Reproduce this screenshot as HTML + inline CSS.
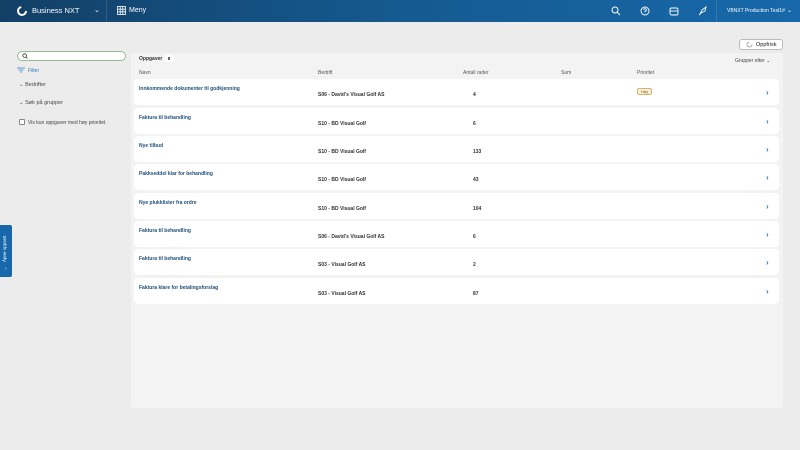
<!DOCTYPE html>
<html><head><meta charset="utf-8"><style>
*{margin:0;padding:0;box-sizing:border-box}
body{width:800px;height:450px;overflow:hidden;background:#ececec;font-family:"Liberation Sans",sans-serif;position:relative;color:#222}
.hdr{position:absolute;left:0;top:0;width:800px;height:22px;background:linear-gradient(90deg,#123f66 0%,#155a90 50%,#1768aa 100%);color:#fff;font-size:7px}
.hdr span{position:absolute;top:7px}
.sep{position:absolute;top:0;width:1px;height:22px;background:rgba(255,255,255,.12)}
.panel{position:absolute;left:131px;top:53px;width:652px;height:355px;background:#f3f3f3;border-radius:3px}
.row{position:absolute;left:134px;width:645px;height:26px;background:#fff;border-radius:4px}
.row .n{position:absolute;left:5px;top:7px;font-size:5px;font-weight:bold;color:#1e4f7d}
.row .b{position:absolute;left:184px;top:13px;font-size:5px;font-weight:bold;color:#333}
.row .a{position:absolute;left:339px;top:13px;font-size:5px;font-weight:bold;color:#333}
.row .c{position:absolute;left:632px;top:10px;font-size:8px;line-height:8px;font-weight:bold;color:#2a7bc2}
.th{position:absolute;top:70px;font-size:5px;color:#555}
.s{position:absolute;font-size:5.5px;color:#444}
</style></head><body>
<div class="hdr">
<svg style="position:absolute;left:17px;top:6px" width="10" height="10" viewBox="0 0 10 10"><circle cx="5" cy="5" r="4" fill="none" stroke="#fff" stroke-width="2" stroke-dasharray="18 7"/></svg>
<span style="left:32px;top:6px;font-size:7.5px">Business NXT</span>
<span style="left:94px;top:6px">⌄</span>
<div class="sep" style="left:106px"></div>
<svg style="position:absolute;left:117px;top:6px" width="9" height="9" viewBox="0 0 9 9" fill="none" stroke="#fff" stroke-width=".8"><rect x=".5" y=".5" width="8" height="8"/><path d="M3.2 .5v8M5.8 .5v8M.5 3.2h8M.5 5.8h8"/></svg>
<span style="left:129px;top:7px">Meny</span>
<svg style="position:absolute;left:611px;top:6px" width="10" height="10" viewBox="0 0 10 10" fill="none" stroke="#fff" stroke-width="1"><circle cx="4" cy="4" r="3"/><path d="M6.2 6.2L9 9"/></svg>
<svg style="position:absolute;left:640px;top:6px" width="10" height="10" viewBox="0 0 10 10" fill="none" stroke="#fff" stroke-width=".9"><circle cx="5" cy="5" r="4"/><path d="M3.7 4a1.3 1.3 0 1 1 1.3 1.3v1"/></svg>
<svg style="position:absolute;left:669px;top:6px" width="10" height="10" viewBox="0 0 10 10" fill="none" stroke="#fff" stroke-width=".9"><rect x="1" y="2" width="8" height="7" rx="1.5"/><path d="M1 5h8"/></svg>
<svg style="position:absolute;left:698px;top:6px" width="10" height="10" viewBox="0 0 10 10" fill="none" stroke="#fff" stroke-width=".9"><path d="M2 8l2-4 4-3-1 4-4 2zM1 9l2-2"/></svg>
<div class="sep" style="left:716px"></div>
<span style="left:727px;top:8px;font-size:5px">VBNXT Production Test1#</span>
<span style="left:787px;top:7px;font-size:6px">⌄</span>
</div>
<div style="position:absolute;left:17px;top:51px;width:109px;height:10px;border:1px solid #9ab99a;border-radius:6px;background:#fff"></div>
<svg style="position:absolute;left:22px;top:53px" width="6" height="6" viewBox="0 0 6 6" fill="none" stroke="#333" stroke-width=".8"><circle cx="2.6" cy="2.6" r="1.8"/><path d="M4 4l1.5 1.5"/></svg>
<svg style="position:absolute;left:17px;top:67px" width="8" height="6" viewBox="0 0 8 6" stroke="#2a7bc2" stroke-width=".8"><path d="M0 1h8M1.5 3h5M3 5h2"/></svg>
<div class="s" style="left:28px;top:68px;color:#2a7bc2;font-size:5px">Filter</div>
<div class="s" style="left:19px;top:82px">⌄ Bedrifter</div>
<div class="s" style="left:19px;top:100px">⌄ Søk på grupper</div>
<div style="position:absolute;left:19px;top:119px;width:6px;height:6px;border:1px solid #888;border-radius:1px;background:#fff"></div>
<div class="s" style="left:28px;top:120px;font-size:5px">Vis kun oppgaver med høy prioritet</div>
<div style="position:absolute;left:0;top:225px;width:12px;height:52px;background:#1768aa;border-radius:0 2px 2px 0"></div>
<div style="position:absolute;left:2px;top:262px;transform:rotate(-90deg);transform-origin:left top;color:#fff;font-size:4.5px;white-space:nowrap">Åpne oppsett</div>
<div style="position:absolute;left:5px;top:266px;color:#fff;font-size:5px">›</div>
<div style="position:absolute;left:739px;top:39px;width:44px;height:11px;border:1px solid #bbb;border-radius:3px;background:#fff;font-size:5.5px;padding:2px 0 0 16px">Oppfrisk</div>
<svg style="position:absolute;left:746px;top:41px" width="7" height="7" viewBox="0 0 7 7" fill="none" stroke="#555" stroke-width=".7"><path d="M6 3.5A2.5 2.5 0 1 1 3.5 1" stroke-dasharray="1 .6"/></svg>
<div class="panel"></div>
<div class="s" style="left:139px;top:56px;font-weight:bold;font-size:5px;color:#333">Oppgaver</div>
<div style="position:absolute;left:164px;top:55px;width:10px;height:7px;background:#fff;border-radius:4px;font-size:4.5px;text-align:center;line-height:7px;font-weight:bold">8</div>
<div class="s" style="left:735px;top:58px;font-size:5px">Grupper etter ⌄</div>
<div class="th" style="left:139px">Navn</div>
<div class="th" style="left:318px">Bedrift</div>
<div class="th" style="left:463px">Antall rader</div>
<div class="th" style="left:561px">Sum</div>
<div class="th" style="left:637px">Prioritet</div>
<div class="row" style="top:79px"><div class="n">Innkommende dokumenter til godkjenning</div><div class="b">S06 - David's Visual Golf AS</div><div class="a">4</div><div style="position:absolute;left:503px;top:9px;width:15px;height:7px;border:1px solid #d9b56a;background:#fbf0d8;border-radius:2px;font-size:4px;text-align:center;line-height:5px;color:#7a5a20">Høy</div><div class="c">›</div></div>
<div class="row" style="top:107.5px"><div class="n">Faktura til behandling</div><div class="b">S10 - BD Visual Golf</div><div class="a">6</div><div class="c">›</div></div>
<div class="row" style="top:136px"><div class="n">Nye tilbud</div><div class="b">S10 - BD Visual Golf</div><div class="a">133</div><div class="c">›</div></div>
<div class="row" style="top:164px"><div class="n">Pakkseddel klar for behandling</div><div class="b">S10 - BD Visual Golf</div><div class="a">43</div><div class="c">›</div></div>
<div class="row" style="top:192.5px"><div class="n">Nye plukklister fra ordre</div><div class="b">S10 - BD Visual Golf</div><div class="a">104</div><div class="c">›</div></div>
<div class="row" style="top:221px"><div class="n">Faktura til behandling</div><div class="b">S06 - David's Visual Golf AS</div><div class="a">6</div><div class="c">›</div></div>
<div class="row" style="top:249px"><div class="n">Faktura til behandling</div><div class="b">S03 - Visual Golf AS</div><div class="a">2</div><div class="c">›</div></div>
<div class="row" style="top:277.5px"><div class="n">Faktura klare for betalingsforslag</div><div class="b">S03 - Visual Golf AS</div><div class="a">87</div><div class="c">›</div></div>
</body></html>
